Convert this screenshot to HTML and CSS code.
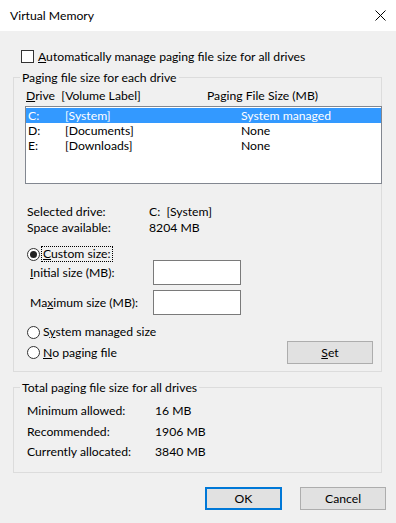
FILE: index.html
```html
<!DOCTYPE html>
<html>
<head>
<meta charset="utf-8">
<link rel="stylesheet" href="styles.css">
</head>
<body>
<div class="window">
  <div class="titlebar">
    <span class="title">Virtual Memory</span>
    <svg class="close" width="11" height="11" viewBox="0 0 11 11"><path d="M0.5 0.5L10.5 10.5M10.5 0.5L0.5 10.5" stroke="#000" stroke-width="1" fill="none"/></svg>
  </div>
  <div class="content">
    <div class="auto-row">
      <span class="checkbox"></span>
      <span><u>A</u>utomatically manage paging file size for all drives</span>
    </div>

    <div class="group group-drives">
      <div class="group-title">Paging file size for each drive</div>
      <div class="list-header">
        <span class="hcol1"><u>D</u>rive&nbsp; [Volume Label]</span>
        <span>Paging File Size (MB)</span>
      </div>
      <div class="listbox">
        <div class="lrow selected"><span>C:</span><span>[System]</span><span>System managed</span></div>
        <div class="lrow"><span>D:</span><span>[Documents]</span><span>None</span></div>
        <div class="lrow"><span>E:</span><span>[Downloads]</span><span>None</span></div>
      </div>
      <div class="info">
        <span>Selected drive:</span><span>C:&nbsp; [System]</span>
        <span>Space available:</span><span>8204 MB</span>
      </div>
      <div class="radio-row custom">
        <span class="radio checked"></span>
        <span class="focus"><u>C</u>ustom size:</span>
      </div>
      <div class="size-row first">
        <span><u>I</u>nitial size (MB):</span>
        <span class="input"></span>
      </div>
      <div class="size-row second">
        <span>Ma<u>x</u>imum size (MB):</span>
        <span class="input"></span>
      </div>
      <div class="radio-row system">
        <span class="radio"></span>
        <span>S<u>y</u>stem managed size</span>
      </div>
      <div class="radio-row nopaging">
        <span class="radio"></span>
        <span><u>N</u>o paging file</span>
        <span class="button set-btn"><u>S</u>et</span>
      </div>
    </div>

    <div class="group group-total">
      <div class="group-title">Total paging file size for all drives</div>
      <div class="totals">
        <span>Minimum allowed:</span><span>16 MB</span>
        <span>Recommended:</span><span>1906 MB</span>
        <span>Currently allocated:</span><span>3840 MB</span>
      </div>
    </div>

    <div class="actions">
      <span class="button ok-btn">OK</span>
      <span class="button cancel-btn">Cancel</span>
    </div>
  </div>
</div>
</body>
</html>
```
FILE: styles.css
```css
html, body {
  margin: 0;
  padding: 0;
}
body {
  width: 396px;
  height: 523px;
  overflow: hidden;
  background: #f0f0f0;
  font-family: "Segoe UI", Lato, "Noto Sans", sans-serif;
  font-size: 12.2px;
  color: #000;
}
u {
  text-decoration: underline;
  text-underline-offset: 1px;
}
.window {
  width: 396px;
  height: 523px;
  display: flex;
  flex-direction: column;
}
.titlebar {
  height: 31px;
  flex: none;
  background: #fff;
  display: flex;
  align-items: center;
  justify-content: space-between;
  padding: 0 10px 0 10px;
  box-sizing: border-box;
}
.title {
  line-height: 16px;
}
.close {
  display: block;
}
.content {
  padding: 0 14px 0 13px;
  display: flex;
  flex-direction: column;
}
.auto-row {
  margin-top: 18px;
  height: 15px;
  line-height: 15px;
  display: flex;
  align-items: center;
  gap: 4px;
  padding-left: 8px;
}
.checkbox {
  width: 13px;
  height: 13px;
  box-sizing: border-box;
  border: 1px solid #333;
  background: #fff;
  flex: none;
}
.group {
  border: 1px solid #dcdcdc;
  display: flex;
  flex-direction: column;
}
.group-drives {
  margin-top: 13px;
  padding-bottom: 7px;
}
.group-title {
  margin-top: -8px;
  margin-left: 6px;
  padding: 0 2px;
  line-height: 15px;
  background: #f0f0f0;
  align-self: flex-start;
}
.list-header {
  margin-top: 3px;
  line-height: 15px;
  padding-left: 12px;
  display: flex;
}
.hcol1 {
  width: 181px;
}
.listbox {
  margin-top: 3px;
  margin-left: 11px;
  width: 357px;
  height: 78px;
  box-sizing: border-box;
  border: 1px solid #828790;
  background: #fff;
  padding: 1px 0 0 0;
}
.lrow {
  display: grid;
  grid-template-columns: 37px 176px 1fr;
  height: 15px;
  line-height: 15px;
  padding-left: 2px;
}
.lrow.selected {
  background: #3399ff;
  color: #fff;
}
.info {
  margin-top: 20px;
  padding-left: 13px;
  display: grid;
  grid-template-columns: 122px 1fr;
  line-height: 16px;
}
.radio-row {
  display: flex;
  align-items: center;
  padding-left: 13px;
  line-height: 14px;
  height: 14px;
  gap: 3px;
}
.radio {
  width: 13px;
  height: 13px;
  box-sizing: border-box;
  border: 1px solid #333;
  border-radius: 50%;
  background: #fff;
  flex: none;
  display: flex;
  align-items: center;
  justify-content: center;
}
.radio.checked::after {
  content: "";
  width: 7px;
  height: 7px;
  border-radius: 50%;
  background: #222;
}
.custom {
  margin-top: 11px;
  gap: 2px;
}
.focus {
  outline: 1px dotted #000;
  outline-offset: 0;
  padding: 0 1px;
}
.size-row {
  display: grid;
  grid-template-columns: 123px 88px;
  align-items: center;
  padding-left: 16px;
}
.size-row.first {
  margin-top: -1px;
}
.size-row.second {
  margin-top: 5px;
}
.input {
  height: 25px;
  box-sizing: border-box;
  border: 1px solid #7a7a7a;
  background: #fff;
}
.system {
  margin-top: 10px;
}
.nopaging {
  margin-top: 2px;
  height: 23px;
}
.button {
  display: flex;
  align-items: center;
  justify-content: center;
  height: 23px;
  box-sizing: border-box;
  border: 1px solid #adadad;
  background: #e1e1e1;
}
.set-btn {
  width: 86px;
  margin-left: auto;
  margin-right: 8px;
}
.group-total {
  margin-top: 15px;
  padding-bottom: 9px;
}
.totals {
  margin-top: 6px;
  padding-left: 13px;
  display: grid;
  grid-template-columns: 128px 1fr;
  line-height: 20.5px;
}
.actions {
  margin-top: 14px;
  margin-right: -4px;
  display: flex;
  justify-content: flex-end;
  gap: 18px;
}
.ok-btn {
  width: 77px;
  border: 2px solid #0078d7;
}
.cancel-btn {
  width: 86px;
}
```
